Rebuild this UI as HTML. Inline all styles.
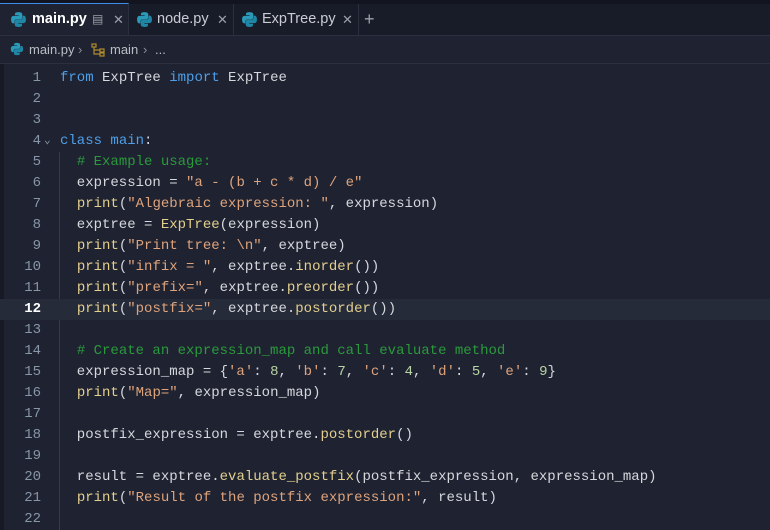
<!DOCTYPE html><html><head><style>
body{margin:0;width:770px;height:530px;background:#1f2331;overflow:hidden;font-family:"Liberation Sans",sans-serif;position:relative}
.top{position:absolute;left:0;top:0;width:770px;height:4px;background:#12151f}
.tabs{position:absolute;left:0;top:4px;width:770px;height:31px;background:#181c28;border-bottom:1px solid #2b3040}
.tab{position:absolute;top:0;height:31px;color:#c9ccd3;font-size:14.5px;line-height:31px;border-right:1px solid #2b3040}
.tab.act{background:#1f2331;color:#fff;border-top:1px solid #3b8eea;height:31px;top:-1px}
.x{position:absolute;color:#9aa0aa;font-size:13px}
.py{position:absolute;width:17px;height:17px}
.bc{position:absolute;left:0;top:36px;width:770px;height:27px;border-bottom:1px solid #2b3040;color:#b9bdc5;font-size:13px;line-height:27px}
.left{position:absolute;left:0;top:64px;width:4px;height:466px;background:#171a25}
.code{position:absolute;left:0;top:68px;width:770px;font-family:"Liberation Mono",monospace;font-size:14px}
.l{height:21px;line-height:21px;position:relative;white-space:pre}
.n{position:absolute;left:0;width:41px;text-align:right;color:#8796a8}
.c{position:absolute;left:60px;color:#d6d8dd}
.hl{background:#262b3a}
.hl .n{color:#fff;font-weight:bold}
.k{color:#4e9ee8}.s{color:#dea37c}.f{color:#e3cf8e}.cm{color:#2a9a3c}.nu{color:#b9d4a4}
.guide{position:absolute;left:59px;top:152px;width:1px;height:378px;background:#363b4b}
</style></head><body>
<div class="top"></div>
<div class="tabs">
 <div class="tab act" style="left:0;width:128px">
  <svg class="py" style="left:10px;top:7px" viewBox="0 0 16 16"><path d="M8 1C4.5 1 4.7 2.5 4.7 2.5V4h3.4v.6H3.3S1 4.3 1 8s2 3.6 2 3.6h1.2V9.9s-.1-2 2-2h3.4s1.9 0 1.9-1.9V2.9S11.8 1 8 1z" fill="#2a9ab8"/><path d="M8 15c3.5 0 3.3-1.5 3.3-1.5V12H7.9v-.6h4.8S15 11.7 15 8s-2-3.6-2-3.6h-1.2v1.7s.1 2-2 2H6.4s-1.9 0-1.9 1.9v3.1S4.2 15 8 15z" fill="#1f86a6"/></svg>
  <span style="position:absolute;left:32px;font-weight:bold">main.py</span>
  <span class="x" style="left:92px;top:0;font-size:12px">▤</span><span class="x" style="left:113px">✕</span></div>
 <div class="tab" style="left:129px;width:104px">
  <svg class="py" style="left:7px;top:7px" viewBox="0 0 16 16"><path d="M8 1C4.5 1 4.7 2.5 4.7 2.5V4h3.4v.6H3.3S1 4.3 1 8s2 3.6 2 3.6h1.2V9.9s-.1-2 2-2h3.4s1.9 0 1.9-1.9V2.9S11.8 1 8 1z" fill="#2a9ab8"/><path d="M8 15c3.5 0 3.3-1.5 3.3-1.5V12H7.9v-.6h4.8S15 11.7 15 8s-2-3.6-2-3.6h-1.2v1.7s.1 2-2 2H6.4s-1.9 0-1.9 1.9v3.1S4.2 15 8 15z" fill="#1f86a6"/></svg>
  <span style="position:absolute;left:28px">node.py</span><span class="x" style="left:88px">✕</span></div>
 <div class="tab" style="left:234px;width:124px">
  <svg class="py" style="left:7px;top:7px" viewBox="0 0 16 16"><path d="M8 1C4.5 1 4.7 2.5 4.7 2.5V4h3.4v.6H3.3S1 4.3 1 8s2 3.6 2 3.6h1.2V9.9s-.1-2 2-2h3.4s1.9 0 1.9-1.9V2.9S11.8 1 8 1z" fill="#2a9ab8"/><path d="M8 15c3.5 0 3.3-1.5 3.3-1.5V12H7.9v-.6h4.8S15 11.7 15 8s-2-3.6-2-3.6h-1.2v1.7s.1 2-2 2H6.4s-1.9 0-1.9 1.9v3.1S4.2 15 8 15z" fill="#1f86a6"/></svg>
  <span style="position:absolute;left:28px">ExpTree.py</span><span class="x" style="left:108px">✕</span></div>
 <span style="position:absolute;left:364px;top:0;line-height:31px;color:#9aa0aa;font-size:18px">+</span>
</div>
<div class="bc">
 <svg class="py" style="left:10px;top:6px;width:14px;height:14px" viewBox="0 0 16 16"><path d="M8 1C4.5 1 4.7 2.5 4.7 2.5V4h3.4v.6H3.3S1 4.3 1 8s2 3.6 2 3.6h1.2V9.9s-.1-2 2-2h3.4s1.9 0 1.9-1.9V2.9S11.8 1 8 1z" fill="#2a9ab8"/><path d="M8 15c3.5 0 3.3-1.5 3.3-1.5V12H7.9v-.6h4.8S15 11.7 15 8s-2-3.6-2-3.6h-1.2v1.7s.1 2-2 2H6.4s-1.9 0-1.9 1.9v3.1S4.2 15 8 15z" fill="#1f86a6"/></svg>
 <span style="position:absolute;left:29px">main.py</span>
 <span style="position:absolute;left:78px;color:#8a8f99">›</span>
 <svg style="position:absolute;left:91px;top:7px" width="14" height="14" viewBox="0 0 14 14" fill="none" stroke="#b08a2e" stroke-width="1.2"><rect x="1" y="1" width="4" height="3"/><rect x="9" y="6" width="4" height="3"/><rect x="9" y="10" width="4" height="3"/><path d="M3 4v7h6M3 7h6"/></svg>
 <span style="position:absolute;left:110px">main</span>
 <span style="position:absolute;left:143px;color:#8a8f99">›</span>
 <span style="position:absolute;left:155px">...</span>
</div>
<div class="left"></div>
<div class="guide"></div>
<div class="code">
<div class="l"><span class="n">1</span><span class="c"><span class="k">from</span> ExpTree <span class="k">import</span> ExpTree</span></div>
<div class="l"><span class="n">2</span></div>
<div class="l"><span class="n">3</span></div>
<div class="l"><span class="n">4</span><span style="position:absolute;left:44px;color:#8796a8;font-size:11px">⌄</span><span class="c"><span class="k">class</span> <span class="k">main</span>:</span></div>
<div class="l"><span class="n">5</span><span class="c">  <span class="cm"># Example usage:</span></span></div>
<div class="l"><span class="n">6</span><span class="c">  expression = <span class="s">"a - (b + c * d) / e"</span></span></div>
<div class="l"><span class="n">7</span><span class="c">  <span class="f">print</span>(<span class="s">"Algebraic expression: "</span>, expression)</span></div>
<div class="l"><span class="n">8</span><span class="c">  exptree = <span class="f">ExpTree</span>(expression)</span></div>
<div class="l"><span class="n">9</span><span class="c">  <span class="f">print</span>(<span class="s">"Print tree: \n"</span>, exptree)</span></div>
<div class="l"><span class="n">10</span><span class="c">  <span class="f">print</span>(<span class="s">"infix = "</span>, exptree.<span class="f">inorder</span>())</span></div>
<div class="l"><span class="n">11</span><span class="c">  <span class="f">print</span>(<span class="s">"prefix="</span>, exptree.<span class="f">preorder</span>())</span></div>
<div class="l hl"><span class="n">12</span><span class="c">  <span class="f">print</span>(<span class="s">"postfix="</span>, exptree.<span class="f">postorder</span>())</span></div>
<div class="l"><span class="n">13</span></div>
<div class="l"><span class="n">14</span><span class="c">  <span class="cm"># Create an expression_map and call evaluate method</span></span></div>
<div class="l"><span class="n">15</span><span class="c">  expression_map = {<span class="s">'a'</span>: <span class="nu">8</span>, <span class="s">'b'</span>: <span class="nu">7</span>, <span class="s">'c'</span>: <span class="nu">4</span>, <span class="s">'d'</span>: <span class="nu">5</span>, <span class="s">'e'</span>: <span class="nu">9</span>}</span></div>
<div class="l"><span class="n">16</span><span class="c">  <span class="f">print</span>(<span class="s">"Map="</span>, expression_map)</span></div>
<div class="l"><span class="n">17</span></div>
<div class="l"><span class="n">18</span><span class="c">  postfix_expression = exptree.<span class="f">postorder</span>()</span></div>
<div class="l"><span class="n">19</span></div>
<div class="l"><span class="n">20</span><span class="c">  result = exptree.<span class="f">evaluate_postfix</span>(postfix_expression, expression_map)</span></div>
<div class="l"><span class="n">21</span><span class="c">  <span class="f">print</span>(<span class="s">"Result of the postfix expression:"</span>, result)</span></div>
<div class="l"><span class="n">22</span></div>
</div>
</body></html>
